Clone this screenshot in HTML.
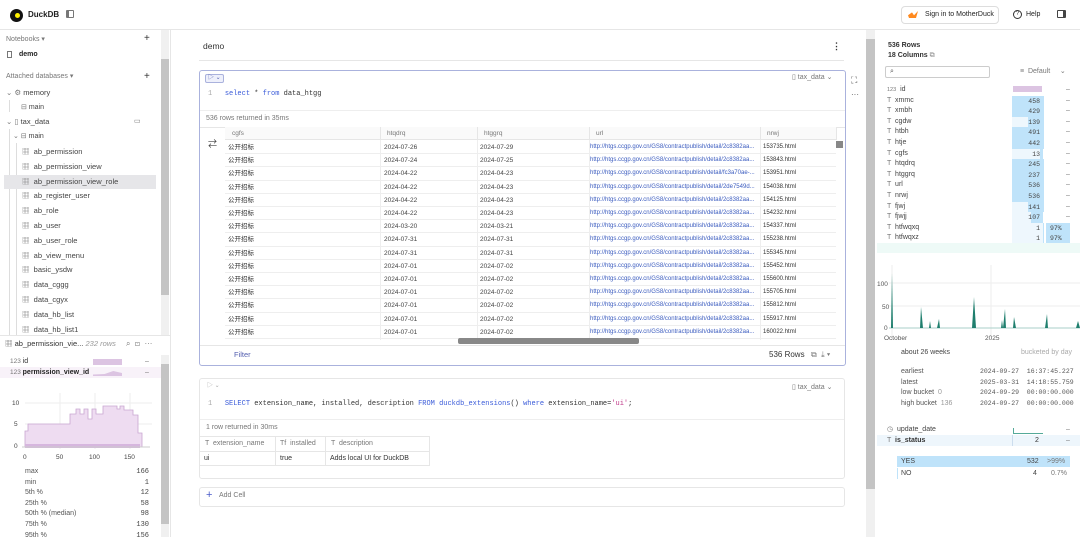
<!DOCTYPE html>
<html><head><meta charset="utf-8"><style>
*{box-sizing:border-box;margin:0;padding:0}
body{width:1080px;height:537px;overflow:hidden;background:#fff;font-family:"Liberation Sans","Noto Sans CJK SC",sans-serif;color:#333;position:relative;font-size:7px}
.a{position:absolute;white-space:nowrap;line-height:1.15}
.mono{font-family:"Liberation Mono",monospace}
.gray{color:#777}
</style></head><body>
<!-- top bar -->
<div class="a" style="left:0;top:0;width:1080px;height:30px;border-bottom:1px solid #e6e6e6"></div>
<div class="a" style="left:10px;top:9px;width:13px;height:13px;border-radius:50%;background:#111"></div>
<div class="a" style="left:15px;top:13px;width:5px;height:5px;border-radius:50%;background:#fff100"></div>
<div class="a" style="left:28px;top:10px;font-size:8px;font-weight:bold;color:#222">DuckDB</div>
<div class="a" style="left:66px;top:10px;width:8px;height:8px;border:1.2px solid #777;border-radius:1px;border-left-width:3px"></div>
<div class="a" style="left:901px;top:6px;width:98px;height:18px;border:1px solid #ddd;border-radius:4px"></div>
<div class="a" style="left:908px;top:11px;width:10px;height:7px;background:#ff8a1f;clip-path:polygon(0 60%,40% 20%,60% 60%,100% 0,80% 100%,10% 100%)"></div>
<div class="a" style="left:925px;top:11px;font-size:7px;color:#222">Sign in to MotherDuck</div>
<div class="a" style="left:1013px;top:10px;width:9px;height:9px;border:1px solid #333;border-radius:50%;font-size:6px;text-align:center;line-height:7px">?</div>
<div class="a" style="left:1026px;top:11px;font-size:7px;color:#222">Help</div>
<div class="a" style="left:1057px;top:10px;width:9px;height:8px;border:1.2px solid #444;border-right-width:3px;border-radius:1px"></div>

<!-- left sidebar -->
<div class="a" style="left:170px;top:30px;width:1px;height:507px;background:#e6e6e6"></div>
<div class="a" style="left:161px;top:30px;width:8px;height:305px;background:#f0f0f0"></div>
<div class="a" style="left:161px;top:59px;width:8px;height:236px;background:#c4c4c4"></div>
<div class="a gray" style="left:6px;top:36px">Notebooks ▾</div>
<div class="a" style="left:144px;top:33px;font-size:10px">+</div>
<div class="a" style="left:7px;top:51px;width:5px;height:7px;border:1px solid #777"></div>
<div class="a" style="left:19px;top:51px;font-weight:bold;color:#222">demo</div>
<div class="a gray" style="left:6px;top:73px">Attached databases ▾</div>
<div class="a" style="left:144px;top:71px;font-size:10px">+</div>
<div class="a gray" style="left:6px;top:89px;font-size:7.5px">⌄ ⚙ <span style="color:#444">memory</span></div>
<div class="a" style="left:9px;top:100px;width:1px;height:12px;background:#ddd"></div>
<div class="a gray" style="left:21px;top:104px">⊟ <span style="color:#444">main</span></div>
<div class="a gray" style="left:6px;top:118px;font-size:7.5px">⌄ ▯ <span style="color:#444">tax_data</span></div>
<div class="a gray" style="left:134px;top:118px">▭</div>
<div class="a" style="left:9px;top:129px;width:1px;height:206px;background:#ddd"></div>
<div class="a gray" style="left:13px;top:133px">⌄ ⊟ <span style="color:#444">main</span></div>
<div class="a" style="left:16px;top:143px;width:1px;height:192px;background:#ddd"></div>
<div class="a" style="left:4px;top:175px;width:152px;height:14px;background:#e6e6e9"></div>
<div id="tbls"></div>

<!-- left bottom panel -->
<div class="a" style="left:0;top:335px;width:170px;height:1px;background:#e6e6e6"></div>
<div class="a gray" style="left:5px;top:340px;font-size:7.5px">▦ <span style="color:#333">ab_permission_vie...</span> <i style="color:#999">232 rows</i></div>
<div class="a gray" style="left:126px;top:339px;font-size:8px">⌕ &nbsp;⊡ &nbsp;···</div>
<div class="a" style="left:161px;top:355px;width:8px;height:182px;background:#f0f0f0"></div>
<div class="a" style="left:161px;top:364px;width:8px;height:160px;background:#c4c4c4"></div>
<div class="a" style="left:0;top:367px;width:161px;height:11px;background:#f8f2f9"></div>
<div class="a gray" style="left:10px;top:358px;font-size:6.5px">123 <span style="color:#333;font-size:7px">id</span></div>
<div class="a" style="left:93px;top:359px;width:29px;height:6px;background:#dcc4e2"></div>
<div class="a gray" style="left:145px;top:358px">–</div>
<div class="a gray" style="left:10px;top:369px;font-size:6.5px">123 <span style="color:#222;font-size:7px;font-weight:bold">permission_view_id</span></div>
<div class="a" style="left:93px;top:371px;width:29px;height:5px;background:#dcc4e2;clip-path:polygon(0 100%,0 70%,40% 60%,70% 0,100% 40%,100% 100%)"></div>
<div class="a gray" style="left:145px;top:369px">–</div>
<svg class="a" style="left:0;top:393px" width="160" height="72">
<g stroke="#eee" stroke-width="1"><line x1="25" y1="10" x2="152" y2="10"/><line x1="25" y1="31" x2="152" y2="31"/><line x1="60" y1="0" x2="60" y2="56"/><line x1="95" y1="0" x2="95" y2="56"/><line x1="130" y1="0" x2="130" y2="56"/></g>
<path d="M25 54 L25 38 L28 38 L28 31 L70 31 L70 21 L76 21 L76 16 L80 16 L80 21 L84 21 L84 16 L88 16 L88 26 L92 26 L92 16 L96 16 L96 21 L103 21 L103 13 L117 13 L117 16 L120 16 L120 13 L124 13 L124 17 L133 17 L133 22 L138 22 L138 40 L142 40 L142 54 Z" fill="#eedcf1" stroke="#c9a6d1" stroke-width=".8"/>
<rect x="25" y="51" width="115" height="4" fill="#d6b6de"/>
<line x1="22" y1="54" x2="150" y2="54" stroke="#ccc"/>
<g font-size="6.5" fill="#444" font-family="Liberation Sans"><text x="12" y="12">10</text><text x="14" y="33">5</text><text x="14" y="55">0</text><text x="23" y="66">0</text><text x="56" y="66">50</text><text x="89" y="66">100</text><text x="124" y="66">150</text></g>
</svg>
<div id="stats"></div>

<!-- main -->
<div class="a" style="left:203px;top:42px;font-size:8.5px;color:#333">demo</div>
<div class="a" style="left:832px;top:41px;font-size:9px;font-weight:bold">⋮</div>
<div class="a" style="left:199px;top:60px;width:645px;height:1px;background:#e6e6e6"></div>
<div class="a" style="left:866px;top:30px;width:9px;height:507px;background:#f0f0f0"></div>
<div class="a" style="left:866px;top:39px;width:9px;height:450px;background:#c4c4c4"></div>
<div class="a" style="left:851px;top:75px;font-size:9px;color:#555">⛶</div>
<div class="a" style="left:851px;top:90px;font-size:8px;color:#555">···</div>

<!-- cell 1 -->
<div class="a" style="left:199px;top:70px;width:647px;height:296px;border:1.5px solid #aab2dd;border-radius:3px"></div>
<div class="a" style="left:205px;top:74px;width:19px;height:9px;border:1px solid #aab2dd;border-radius:2px;background:#eef0fb;font-size:6px;color:#5560b0;padding-left:2px;line-height:7px">▷ ⌄</div>
<div class="a gray" style="left:792px;top:74px">▯ tax_data ⌄</div>
<div class="a mono" style="left:208px;top:90px;font-size:7px"><span style="color:#aaa">1</span> &nbsp;&nbsp;<span style="color:#3a5bd9">select</span> * <span style="color:#3a5bd9">from</span> data_htgg</div>
<div class="a" style="left:200px;top:110px;width:645px;height:1px;background:#eee"></div>
<div class="a gray" style="left:206px;top:115px">536 rows returned in 35ms</div>
<div class="a" style="left:200px;top:127px;width:645px;height:1px;background:#e6e6e6"></div>
<div class="a" style="left:208px;top:139px;font-size:9px;color:#444">⇄</div>
<div id="grid"></div>
<div class="a" style="left:836px;top:141px;width:7px;height:7px;background:#888"></div>
<div class="a" style="left:458px;top:338px;width:181px;height:6px;background:#888;border-radius:2px"></div>
<div class="a" style="left:200px;top:345px;width:645px;height:1px;background:#e6e6e6"></div>
<div class="a" style="left:234px;top:351px;font-size:7.5px;color:#5560b0">Filter</div>
<div class="a" style="left:769px;top:350px;font-size:8px;color:#333">536 Rows</div>
<div class="a gray" style="left:811px;top:350px;font-size:8px">⧉ &nbsp;⤓ ▾</div>

<!-- cell 2 -->
<div class="a" style="left:199px;top:378px;width:646px;height:101px;border:1px solid #e6e6e6;border-radius:3px"></div>
<div class="a" style="left:207px;top:383px;color:#aaa;font-size:6px">▷ ⌄</div>
<div class="a gray" style="left:792px;top:384px">▯ tax_data ⌄</div>
<div class="a mono" style="left:208px;top:400px;font-size:7px"><span style="color:#aaa">1</span> &nbsp;&nbsp;<span style="color:#3a5bd9">SELECT</span> extension_name, installed, description <span style="color:#3a5bd9">FROM duckdb_extensions</span>() <span style="color:#3a5bd9">where</span>  extension_name=<span style="color:#c03a8a">'ui'</span>;</div>
<div class="a" style="left:200px;top:419px;width:644px;height:1px;background:#eee"></div>
<div class="a gray" style="left:206px;top:424px">1 row returned in 30ms</div>
<div class="a" style="left:199px;top:436px;width:231px;height:30px;border:1px solid #e6e6e6"></div>
<div class="a" style="left:199px;top:451px;width:231px;height:1px;background:#e6e6e6"></div>
<div class="a" style="left:275px;top:436px;width:1px;height:30px;background:#e6e6e6"></div>
<div class="a" style="left:325px;top:436px;width:1px;height:30px;background:#e6e6e6"></div>
<div class="a gray" style="left:205px;top:440px">T &nbsp;extension_name</div>
<div class="a gray" style="left:280px;top:440px">Tf &nbsp;installed</div>
<div class="a gray" style="left:331px;top:440px">T &nbsp;description</div>
<div class="a" style="left:204px;top:455px">ui</div>
<div class="a" style="left:280px;top:455px">true</div>
<div class="a" style="left:330px;top:455px">Adds local UI for DuckDB</div>
<div class="a" style="left:199px;top:487px;width:646px;height:20px;border:1px solid #e6e6e6;border-radius:3px"></div>
<div class="a" style="left:206px;top:489px;font-size:11px;color:#4a5bc9">+</div>
<div class="a gray" style="left:219px;top:492px">Add Cell</div>

<!-- right panel -->
<div class="a" style="left:888px;top:42px;font-weight:bold;color:#333">536 Rows</div>
<div class="a" style="left:888px;top:52px;font-weight:bold;color:#333">18 Columns <span style="font-weight:normal;color:#888">⧉</span></div>
<div class="a" style="left:885px;top:66px;width:105px;height:12px;border:1px solid #ccc;border-radius:2px;font-size:7px;color:#555;padding-left:4px;line-height:10px">⌕</div>
<div class="a gray" style="left:1020px;top:68px">≡ &nbsp;Default &nbsp;&nbsp;&nbsp;&nbsp;⌄</div>
<div id="cols"></div>
<div class="a" style="left:877px;top:243px;width:203px;height:10px;background:#eefaf7"></div>
<svg class="a" style="left:877px;top:265px" width="203" height="80">
<g stroke="#eee"><line x1="15" y1="0" x2="15" y2="72"/><line x1="114" y1="0" x2="114" y2="72"/><line x1="12" y1="18" x2="203" y2="18"/><line x1="12" y1="41" x2="203" y2="41"/></g>
<line x1="12" y1="63" x2="203" y2="63" stroke="#aacfc8"/>
<g fill="#1f7f6e"><path d="M14 63 L15 8 L16 63Z"/><path d="M43 63 L44 42 L46 63Z"/><path d="M52 63 L53 56 L54 63Z"/><path d="M60 63 L62 54 L63 63Z"/><path d="M95 63 L97 32 L99 63Z"/><path d="M126 63 L128 44 L129 63Z"/><path d="M124 63 L125 55 L126 63Z"/><path d="M136 63 L137 52 L139 63Z"/><path d="M168 63 L170 49 L171 63Z"/><path d="M199 63 L201 56 L203 63Z"/></g>
<g font-size="6.5" fill="#555" font-family="Liberation Sans"><text x="0" y="21">100</text><text x="5" y="44">50</text><text x="7" y="65">0</text><text x="7" y="75">October</text><text x="108" y="75">2025</text></g>
</svg>
<div class="a" style="left:901px;top:349px;color:#444">about 26 weeks</div>
<div class="a" style="left:1021px;top:349px;color:#aaa">bucketed by day</div>
<div class="a" style="left:901px;top:367px;color:#555;line-height:10.6px">earliest<br>latest<br>low bucket &nbsp;<span style="color:#999">0</span><br>high bucket &nbsp;<span style="color:#999">136</span></div>
<div class="a mono" style="left:980px;top:367px;color:#555;line-height:10.6px;font-size:6.5px">2024-09-27 &nbsp;16:37:45.227<br>2025-03-31 &nbsp;14:18:55.759<br>2024-09-29 &nbsp;00:00:00.000<br>2024-09-27 &nbsp;00:00:00.000</div>
<div class="a gray" style="left:887px;top:426px">◷ &nbsp;<span style="color:#444">update_date</span></div>
<div class="a" style="left:1013px;top:428px;width:30px;height:6px;border-left:1px solid #5a9;border-bottom:1px solid #5a9"></div>
<div class="a gray" style="left:1066px;top:426px">–</div>
<div class="a" style="left:877px;top:435px;width:203px;height:11px;background:#eef6fc"></div>
<div class="a" style="left:1012px;top:435px;width:1px;height:11px;background:#cde"></div>
<div class="a gray" style="left:887px;top:437px">T &nbsp;<b style="color:#333">is_status</b></div>
<div class="a" style="left:1035px;top:437px">2</div>
<div class="a gray" style="left:1066px;top:437px">–</div>
<div class="a" style="left:897px;top:456px;width:173px;height:11px;background:#bfe3fa"></div>
<div class="a" style="left:901px;top:458px;color:#444">YES</div>
<div class="a" style="left:1027px;top:458px;color:#444">532</div>
<div class="a gray" style="left:1047px;top:458px">&gt;99%</div>
<div class="a" style="left:897px;top:468px;width:1px;height:11px;background:#bfe3fa"></div>
<div class="a" style="left:901px;top:470px;color:#444">NO</div>
<div class="a" style="left:1033px;top:470px;color:#444">4</div>
<div class="a gray" style="left:1051px;top:470px">0.7%</div>

<script>
var t=["ab_permission","ab_permission_view","ab_permission_view_role","ab_register_user","ab_role","ab_user","ab_user_role","ab_view_menu","basic_ysdw","data_cggg","data_cgyx","data_hb_list","data_hb_list1"],h="";
t.forEach(function(n,i){h+='<div class="a" style="left:22px;top:'+(148+i*14.8)+'px;font-size:7.5px;color:#444"><span style="color:#888">▦</span>&nbsp; '+n+'</div>'});
document.getElementById('tbls').outerHTML=h;
var s=[["max","166"],["min","1"],["5th %","12"],["25th %","58"],["50th % (median)","98"],["75th %","130"],["95th %","156"]];h="";
s.forEach(function(r,i){h+='<div class="a" style="left:25px;top:'+(468+i*10.6)+'px;color:#555">'+r[0]+'</div><div class="a mono" style="left:120px;width:29px;text-align:right;top:'+(468+i*10.6)+'px;color:#444">'+r[1]+'</div>'});
document.getElementById('stats').outerHTML=h;
var cx=[200,225,380,477,589,760,836],hd=["","cgfs","htqdrq","htggrq","url","nrwj"];h="";
h+='<div class="a" style="left:225px;top:127px;width:611px;height:13px;background:#fafafa;border-bottom:1px solid #e6e6e6"></div>';
for(var c=1;c<6;c++){h+='<div class="a gray" style="left:'+(cx[c]+7)+'px;top:130px;font-size:6.5px">'+hd[c]+'</div><div class="a" style="left:'+cx[c+1]+'px;top:127px;width:1px;height:13px;background:#e6e6e6"></div>';}
var R=[["07-26","07-29","2c8382aa...","153735"],["07-24","07-25","2c8382aa...","153843"],["04-22","04-23","fc3a70ae-...","153951"],["04-22","04-23","2de7549d...","154038"],["04-22","04-23","2c8382aa...","154125"],["04-22","04-23","2c8382aa...","154232"],["03-20","03-21","2c8382aa...","154337"],["07-31","07-31","2c8382aa...","155238"],["07-31","07-31","2c8382aa...","155345"],["07-01","07-02","2c8382aa...","155452"],["07-01","07-02","2c8382aa...","155600"],["07-01","07-02","2c8382aa...","155705"],["07-01","07-02","2c8382aa...","155812"],["07-01","07-02","2c8382aa...","155917"],["07-01","07-02","2c8382aa...","160022"]];
R.forEach(function(r,i){var y=141+i*13.2;
h+='<div class="a" style="left:225px;top:'+(y+12.2)+'px;width:611px;height:1px;background:#eee"></div>';
h+='<div class="a" style="left:228px;top:'+(y+3)+'px;font-size:6.5px;line-height:7px">公开招标</div>';
h+='<div class="a" style="left:384px;top:'+(y+3)+'px;font-size:6.5px;color:#444">2024-'+r[0]+'</div>';
h+='<div class="a" style="left:480px;top:'+(y+3)+'px;font-size:6.5px;color:#444">2024-'+r[1]+'</div>';
h+='<div class="a" style="left:590px;top:'+(y+3)+'px;font-size:6px;color:#3a5bbf">http://htgs.ccgp.gov.cn/GS8/contractpublish/detail/'+r[2]+'</div>';
h+='<div class="a" style="left:763px;top:'+(y+3)+'px;font-size:6px;color:#333">'+r[3]+'.html</div>';});
for(var c=2;c<6;c++)h+='<div class="a" style="left:'+cx[c]+'px;top:140px;width:1px;height:200px;background:#eee"></div>';
document.getElementById('grid').outerHTML=h;
var C=[["id","",""],["xmmc","458",1],["xmbh","429",1],["cgdw","139",.5],["htbh","491",1],["htje","442",1],["cgfs","13",.1],["htqdrq","245",1],["htggrq","237",1],["url","536",1],["nrwj","536",1],["fjwj","141",.5],["fjwjj","107",.4],["htfwqxq","1",0],["htfwqxz","1",0],["create_date","",""]];h="";
C.forEach(function(r,i){var y=85+i*10.6;
var ic=i==0?'<span style="font-size:5.5px">123</span>':(i==15?'◷':'T');
h+='<div class="a gray" style="left:887px;top:'+(y+1)+'px">'+ic+' &nbsp;<span style="color:'+(i==15?'#222;font-weight:bold':'#444')+'">'+r[0]+'</span></div>';
if(i==0)h+='<div class="a" style="left:1013px;top:'+(y+1)+'px;width:29px;height:6px;background:#dcc4e2"></div>';
else if(i<15){h+='<div class="a" style="left:1012px;top:'+y+'px;width:31px;height:10.6px;background:#eef7fd"></div><div class="a" style="left:'+(1012+31*(1-r[2]))+'px;top:'+y+'px;width:'+(31*r[2]+0.5)+'px;height:10.6px;background:#bfe3fa"></div><div class="a mono" style="left:1010px;width:30px;text-align:right;top:'+(y+2)+'px;font-size:6.5px;color:#444">'+r[1]+'</div>';}
else h+='<div class="a" style="left:1013px;top:'+(y+2)+'px;width:30px;height:6px;border-left:1px solid #5a9;border-bottom:1px solid #5a9"></div>';
if(i==13||i==14)h+='<div class="a" style="left:1046px;top:'+y+'px;width:24px;height:10.6px;background:#bfe3fa"></div><div class="a mono" style="left:1050px;top:'+(y+2)+'px;font-size:6.5px;color:#444">97%</div>';
else h+='<div class="a gray" style="left:1066px;top:'+(y+1)+'px">–</div>';});
document.getElementById('cols').outerHTML=h;
</script>
</body></html>
